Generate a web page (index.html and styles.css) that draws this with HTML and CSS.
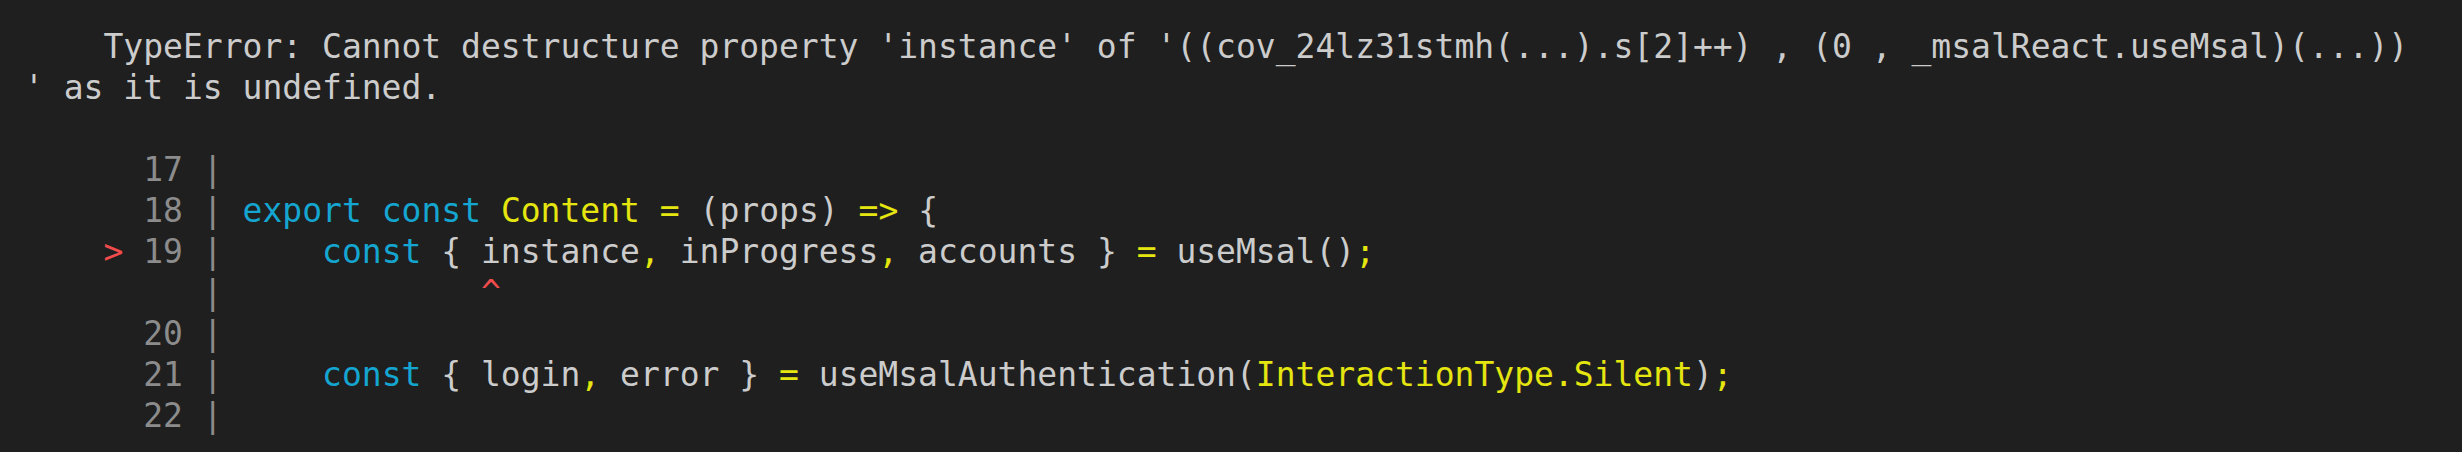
FILE: index.html
```html
<!DOCTYPE html>
<html lang="en">
<head>
<meta charset="utf-8">
<title>TypeError</title>
<link rel="stylesheet" href="styles.css">
</head>
<body>
<main class="overlay">
<pre class="message">    TypeError: Cannot destructure property 'instance' of '((cov_24lz31stmh(...).s[2]++) , (0 , _msalReact.useMsal)(...))
' as it is undefined.</pre>
<pre class="frame"><span class="gutter">      17 |</span>
<span class="gutter">      18 |</span> <span class="kw">export</span> <span class="kw">const</span> <span class="yl">Content</span> <span class="yl">=</span> (props) <span class="yl">=&gt;</span> {
<span class="mark">    &gt;</span><span class="gutter"> 19 |</span>     <span class="kw">const</span> { instance<span class="yl">,</span> inProgress<span class="yl">,</span> accounts } <span class="yl">=</span> useMsal()<span class="yl">;</span>
<span class="gutter">         |</span>             <span class="mark">^</span>
<span class="gutter">      20 |</span>
<span class="gutter">      21 |</span>     <span class="kw">const</span> { login<span class="yl">,</span> error } <span class="yl">=</span> useMsalAuthentication(<span class="yl">InteractionType.Silent</span>)<span class="yl">;</span>
<span class="gutter">      22 |</span></pre>
</main>
</body>
</html>
```
FILE: styles.css
```css
html, body {
  margin: 0;
  background: #1f1f1f;
}

.overlay {
  padding: 26px 0 0 24px;
  height: 452px;
  box-sizing: border-box;
  overflow: hidden;
}

.message,
.frame {
  margin: 0;
  font-family: "DejaVu Sans Mono", "Liberation Mono", monospace;
  font-size: 33px;
  line-height: 41px;
  color: #cccccc;
  white-space: pre;
}

.frame {
  margin-top: 41px;
}

.gutter {
  color: #8c8c8c;
}

.kw {
  color: #14a6d0;
}

.yl {
  color: #e5e510;
}

.mark {
  color: #f14c4c;
}
```
